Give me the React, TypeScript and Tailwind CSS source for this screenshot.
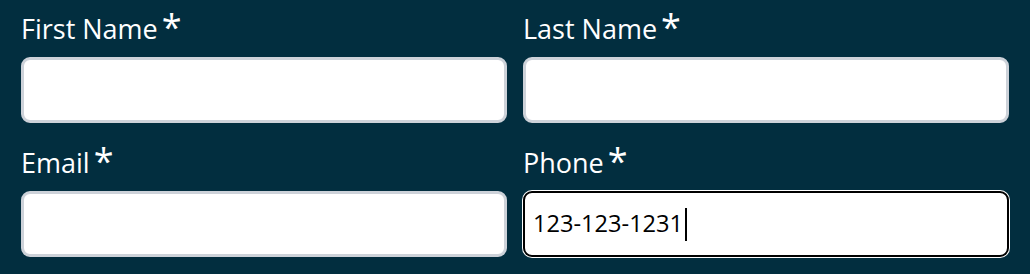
import React from "react";

function Label({ text }: { text: string }) {
  return (
    <div className="flex items-baseline h-[36px] mb-[13px] text-[27px] leading-[36px] text-white">
      <span>{text}</span>
      <span className="ml-[4px] text-[36px] leading-[36px] translate-y-[1px]">*</span>
    </div>
  );
}

function Field({ label, value, focused }: { label: string; value?: string; focused?: boolean }) {
  return (
    <div className="flex flex-col">
      <Label text={label} />
      {focused ? (
        <div className="h-[66px] rounded-[9px] bg-white border-2 border-black ring-1 ring-white flex items-center pl-[8px] text-[23.6px] text-black">
          <span>{value}</span>
          <span className="ml-[2px] w-[1.5px] h-[33px] bg-black" />
        </div>
      ) : (
        <div className="h-[66px] rounded-[9px] bg-white border-[3px] border-[#cdd2d9]" />
      )}
    </div>
  );
}

export default function App() {
  return (
    <div
      className="w-[1030px] h-[274px] bg-[#022e3f] px-[21px] pt-[8px]"
      style={{ fontFamily: '"Open Sans", "Noto Sans", sans-serif' }}
    >
      <div className="grid grid-cols-2 gap-x-[16px] gap-y-[19px]">
        <Field label="First Name" />
        <Field label="Last Name" />
        <Field label="Email" />
        <Field label="Phone" value="123-123-1231" focused />
      </div>
    </div>
  );
}
